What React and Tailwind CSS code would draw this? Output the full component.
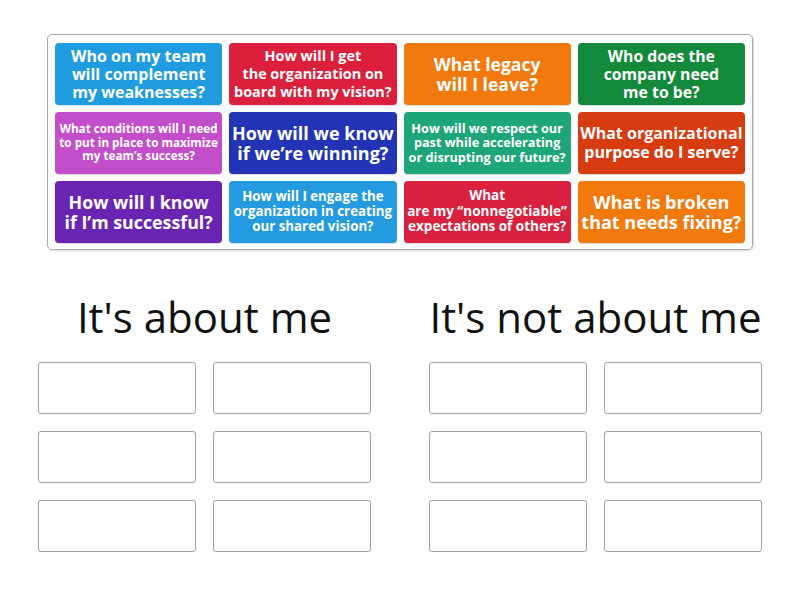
const TILES = [
    { bg: "bg-[#1f9ce0]", size: "text-[16px] leading-[18px]",   lines: ["Who on my team", "will complement", "my weaknesses?"] },
    { bg: "bg-[#dc1f3c]", size: "text-[14.4px] leading-[18px]", lines: ["How will I get", "the organization on", "board with my vision?"] },
    { bg: "bg-[#f27a0c]", size: "text-[17.6px] leading-[20px]", lines: ["What legacy", "will I leave?"] },
    { bg: "bg-[#12893b]", size: "text-[15.8px] leading-[18px]", lines: ["Who does the", "company need", "me to be?"] },
    { bg: "bg-[#c34ec9]", size: "text-[11.7px] leading-[13.5px]", lines: ["What conditions will I need", "to put in place to maximize", "my team’s success?"] },
    { bg: "bg-[#2233b5]", size: "text-[18px] leading-[20px]",   lines: ["How will we know", "if we’re winning?"] },
    { bg: "bg-[#1ea57a]", size: "text-[12.7px] leading-[14.5px]", lines: ["How will we respect our", "past while accelerating", "or disrupting our future?"] },
    { bg: "bg-[#d73b10]", size: "text-[16px] leading-[18.5px]", lines: ["What organizational", "purpose do I serve?"] },
    { bg: "bg-[#6a24b2]", size: "text-[17.8px] leading-[20px]", lines: ["How will I know", "if I’m successful?"] },
    { bg: "bg-[#249be0]", size: "text-[13.3px] leading-[15px]", lines: ["How will I engage the", "organization in creating", "our shared vision?"] },
    { bg: "bg-[#d9213f]", size: "text-[13.5px] leading-[15.5px]", lines: ["What", "are my “nonnegotiable”", "expectations of others?"] },
    { bg: "bg-[#f27a0c]", size: "text-[18px] leading-[20px]",   lines: ["What is broken", "that needs fixing?"] },
];

function Tile({ tile }) {
    return (
        <div className={`h-[62px] rounded-[4px] flex items-center justify-center text-center text-white font-bold shadow-[0_1px_1px_rgba(0,0,0,0.15)] ${tile.bg} ${tile.size}`}>
            <p className="whitespace-nowrap -mt-[1px]">
                {tile.lines.map((line, i) => (
                    <span key={i} className="block">{line}</span>
                ))}
            </p>
        </div>
    );
}

function DropGroup({ title }) {
    return (
        <div className="w-[333px] flex flex-col">
            <h2 className="h-[48px] text-[42px] leading-[48px] text-center text-[#111] font-normal whitespace-nowrap">
                {title}
            </h2>
            <div className="mt-[21px] grid grid-cols-2 gap-x-[17px] gap-y-[17px]">
                {[0, 1, 2, 3, 4, 5].map((i) => (
                    <div key={i} className="h-[52px] bg-white border border-[#a3a3a3] rounded-[3px] shadow-[0_0_1px_rgba(0,0,0,0.1)]" />
                ))}
            </div>
        </div>
    );
}

export default function App() {
    return (
        <div className="w-[800px] h-[600px] bg-white overflow-hidden" style={{ fontFamily: '"Open Sans", "Liberation Sans", sans-serif' }}>
            {/* Tile bank */}
            <div className="ml-[47px] mt-[34px] w-[706px] border border-[#aaaaaa] rounded-[5px] px-[7px] pt-[8px] pb-[6px] shadow-[1px_1px_2px_rgba(0,0,0,0.15)]">
                <div className="grid grid-cols-4 gap-[7px]">
                    {TILES.map((tile, i) => (
                        <Tile key={i} tile={tile} />
                    ))}
                </div>
            </div>

            {/* Drop zones */}
            <div className="flex gap-[58px] pl-[38px] mt-[43px]">
                <DropGroup title="It's about me" />
                <DropGroup title="It's not about me" />
            </div>
        </div>
    );
}
